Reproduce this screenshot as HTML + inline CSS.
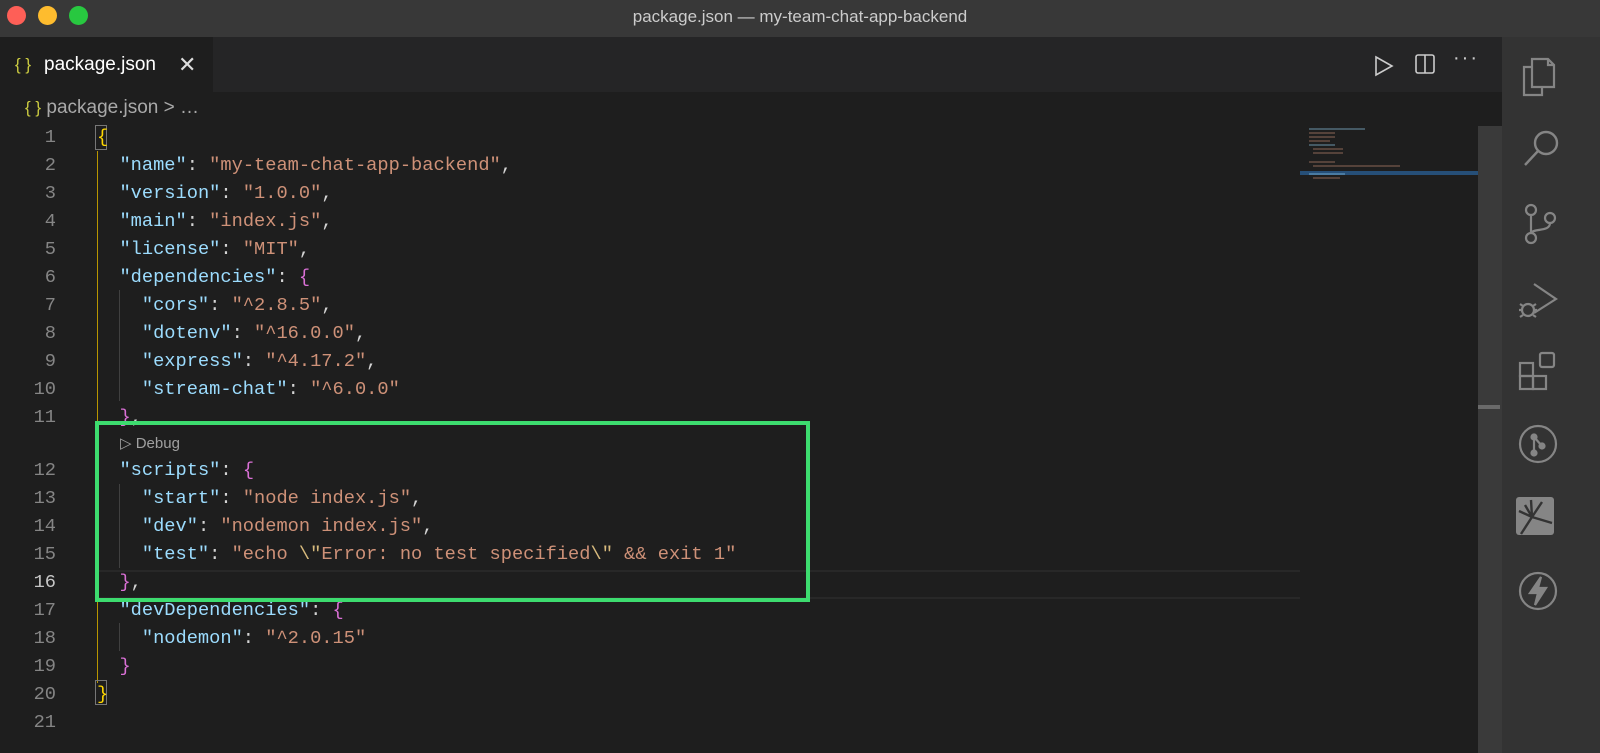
<!DOCTYPE html>
<html><head><meta charset="utf-8"><style>
*{margin:0;padding:0;box-sizing:border-box}
body{width:1600px;height:753px;background:#1e1e1e;overflow:hidden;position:relative;font-family:"Liberation Sans",sans-serif}
.title{position:absolute;left:0;top:0;width:1600px;height:37px;background:#383838;color:#cccccc;font-size:17px;text-align:center;line-height:33px}
.dot{position:absolute;top:6px;width:19px;height:19px;border-radius:50%}
.tabs{position:absolute;left:0;top:37px;width:1502px;height:55px;background:#252526}
.tab{position:absolute;left:0;top:0;width:213px;height:55px;background:#1e1e1e;color:#fff;font-size:19px;line-height:55px}
.act{position:absolute;left:1502px;top:37px;width:98px;height:716px;background:#333333}
.code{position:absolute;font-family:"Liberation Mono",monospace;font-size:18.7px;white-space:pre;line-height:28px;color:#d4d4d4}
.ln{position:absolute;left:0;width:56px;text-align:right;font-family:"Liberation Mono",monospace;font-size:18.7px;color:#858585;line-height:28px}
.k{color:#9cdcfe}.s{color:#ce9178}.y{color:#ffd700}.m{color:#da70d6}.e{color:#d7ba7d}
.g{position:absolute;width:1px;background:#404040}
</style></head><body>
<div class="title">package.json — my-team-chat-app-backend
<div class="dot" style="left:7px;background:#fe5f57"></div>
<div class="dot" style="left:38px;background:#febc2e"></div>
<div class="dot" style="left:69px;background:#28c840"></div>
</div>
<div class="tabs">
<div class="tab"><span style="color:#cbcb41;position:absolute;left:15px;font-size:17px">{ }</span><span style="position:absolute;left:44px">package.json</span><span style="position:absolute;left:178px;font-size:22px;color:#ddd">✕</span></div>
<svg style="position:absolute;left:1374px;top:18px" width="20" height="22"><path d="M2 2 L18 11 L2 20 Z" fill="none" stroke="#ccc" stroke-width="1.6"/></svg>
<svg style="position:absolute;left:1414px;top:16px" width="22" height="22"><rect x="2" y="2" width="18" height="18" rx="2" fill="none" stroke="#ccc" stroke-width="1.6"/><line x1="11" y1="2" x2="11" y2="20" stroke="#ccc" stroke-width="1.6"/></svg>
<div style="position:absolute;left:1453px;top:10px;color:#ccc;font-size:20px;letter-spacing:2px">···</div>
</div>
<div style="position:absolute;left:25px;top:97px;font-size:19px;color:#a9a9a9"><span style="color:#cbcb41;font-size:17px">{ }</span> package.json &gt; …</div>

<div style="position:absolute;left:1478px;top:126px;width:24px;height:627px;background:#3a3a3a"></div>
<div style="position:absolute;left:1478px;top:405px;width:22px;height:4px;background:#6a6a6a"></div>
<div style="position:absolute;left:1300px;top:171px;width:178px;height:4px;background:#264f78"></div>
<svg style="position:absolute;left:1305px;top:126px" width="140" height="60">
<g stroke-width="1.2">
<line x1="4" y1="3" x2="60" y2="3" stroke="#9cdcfe" opacity=".5"/>
<line x1="4" y1="7" x2="30" y2="7" stroke="#ce9178" opacity=".5"/>
<line x1="4" y1="11" x2="30" y2="11" stroke="#ce9178" opacity=".5"/>
<line x1="4" y1="15" x2="25" y2="15" stroke="#ce9178" opacity=".5"/>
<line x1="4" y1="19" x2="30" y2="19" stroke="#9cdcfe" opacity=".5"/>
<line x1="8" y1="23" x2="38" y2="23" stroke="#ce9178" opacity=".5"/>
<line x1="8" y1="27" x2="38" y2="27" stroke="#ce9178" opacity=".5"/>
<line x1="4" y1="36" x2="30" y2="36" stroke="#ce9178" opacity=".5"/>
<line x1="8" y1="40" x2="95" y2="40" stroke="#ce9178" opacity=".5"/>
<line x1="4" y1="48" x2="40" y2="48" stroke="#9cdcfe" opacity=".5"/>
<line x1="8" y1="52" x2="35" y2="52" stroke="#ce9178" opacity=".5"/>
</g></svg>

<div class="act">
<svg style="position:absolute;left:18px;top:18px" width="40" height="44" fill="none" stroke="#858585" stroke-width="2.2"><path d="M12 4 H28 L34 10 V32 H12 Z M28 4 V10 H34"/><path d="M12 12 H4 V40 H22 V32"/></svg>
<svg style="position:absolute;left:18px;top:90px" width="44" height="44" fill="none" stroke="#858585" stroke-width="2.4"><circle cx="26" cy="16" r="11"/><line x1="18" y1="24" x2="5" y2="38"/></svg>
<svg style="position:absolute;left:18px;top:165px" width="44" height="44" fill="none" stroke="#858585" stroke-width="2.2"><circle cx="11" cy="8" r="5"/><circle cx="11" cy="36" r="5"/><circle cx="30" cy="16" r="5"/><path d="M11 13 V31 M30 21 C30 30 14 26 11 31"/></svg>
<svg style="position:absolute;left:16px;top:242px" width="44" height="44" fill="none" stroke="#858585" stroke-width="2.2"><path d="M16 5 L38 20 L16 34"/><circle cx="10" cy="31" r="6"/><path d="M2 25 L5 27 M18 25 L15 27 M1 31 H4 M16 31 H19 M2 38 L5 36 M18 38 L15 36"/></svg>
<svg style="position:absolute;left:16px;top:314px" width="44" height="44" fill="none" stroke="#858585" stroke-width="2.2"><rect x="2" y="12" width="13" height="13"/><rect x="2" y="25" width="13" height="13"/><rect x="15" y="25" width="13" height="13"/><rect x="22" y="2" width="14" height="14" rx="2"/></svg>
<svg style="position:absolute;left:16px;top:385px" width="44" height="44" fill="none" stroke="#858585" stroke-width="2.2"><circle cx="20" cy="22" r="18"/><circle cx="16" cy="15" r="2.5" fill="#858585"/><circle cx="16" cy="31" r="2.5" fill="#858585"/><circle cx="24" cy="24" r="2.5" fill="#858585"/><path d="M16 15 V31 M16 15 L24 24"/></svg>
<div style="position:absolute;left:14px;top:460px;width:38px;height:38px;background:#858585;border-radius:3px"><svg width="38" height="38" stroke="#333" stroke-width="2.4" fill="none"><path d="M5 37 L16 20 L36 26 M16 20 L9 8 M16 20 L15 3 M16 20 L26 5 M16 20 L3 14"/></svg></div>
<svg style="position:absolute;left:16px;top:532px" width="44" height="44" fill="none" stroke="#858585" stroke-width="2.2"><circle cx="20" cy="22" r="18"/><path d="M23 8 L12 24 H20 L17 36 L28 19 H20 Z" fill="#858585"/></svg>
</div>

<!-- line numbers -->
<div class="ln" style="top:123px">1<br>2<br>3<br>4<br>5<br>6<br>7<br>8<br>9<br>10<br>11</div>
<div class="ln" style="top:456px">12<br>13<br>14<br>15<br><span style="color:#c6c6c6">16</span><br>17<br>18<br>19<br>20<br>21</div>

<!-- active line -->
<div style="position:absolute;left:97px;top:570px;width:1203px;height:29px;border-top:2px solid #282828;border-bottom:2px solid #282828"></div>
<!-- guides -->
<div style="position:absolute;left:97px;top:151px;width:1px;height:532px;background:#b89500"></div>
<div class="g" style="left:119px;top:290px;height:111px"></div>
<div class="g" style="left:119px;top:484px;height:84px"></div>
<div class="g" style="left:119px;top:623px;height:28px"></div>
<div style="position:absolute;left:95px;top:125px;width:12px;height:25px;border:1px solid #777"></div>
<div style="position:absolute;left:95px;top:680px;width:12px;height:25px;border:1px solid #777"></div>

<div class="code" style="left:97px;top:123px"><span class="y">{</span>
  <span class="k">"name"</span>: <span class="s">"my-team-chat-app-backend"</span>,
  <span class="k">"version"</span>: <span class="s">"1.0.0"</span>,
  <span class="k">"main"</span>: <span class="s">"index.js"</span>,
  <span class="k">"license"</span>: <span class="s">"MIT"</span>,
  <span class="k">"dependencies"</span>: <span class="m">{</span>
    <span class="k">"cors"</span>: <span class="s">"^2.8.5"</span>,
    <span class="k">"dotenv"</span>: <span class="s">"^16.0.0"</span>,
    <span class="k">"express"</span>: <span class="s">"^4.17.2"</span>,
    <span class="k">"stream-chat"</span>: <span class="s">"^6.0.0"</span>
  <span class="m">}</span>,</div>
<div style="position:absolute;left:120px;top:434px;font-size:15px;color:#a0a0a0">▷ Debug</div>
<div class="code" style="left:97px;top:456px">  <span class="k">"scripts"</span>: <span class="m">{</span>
    <span class="k">"start"</span>: <span class="s">"node index.js"</span>,
    <span class="k">"dev"</span>: <span class="s">"nodemon index.js"</span>,
    <span class="k">"test"</span>: <span class="s">"echo <span class="e">\"</span>Error: no test specified<span class="e">\"</span> &amp;&amp; exit 1"</span>
  <span class="m">}</span>,
  <span class="k">"devDependencies"</span>: <span class="m">{</span>
    <span class="k">"nodemon"</span>: <span class="s">"^2.0.15"</span>
  <span class="m">}</span>
<span class="y">}</span>
</div>
<div style="position:absolute;left:95px;top:421px;width:715px;height:181px;border:4px solid #3ddc6f"></div>
</body></html>
